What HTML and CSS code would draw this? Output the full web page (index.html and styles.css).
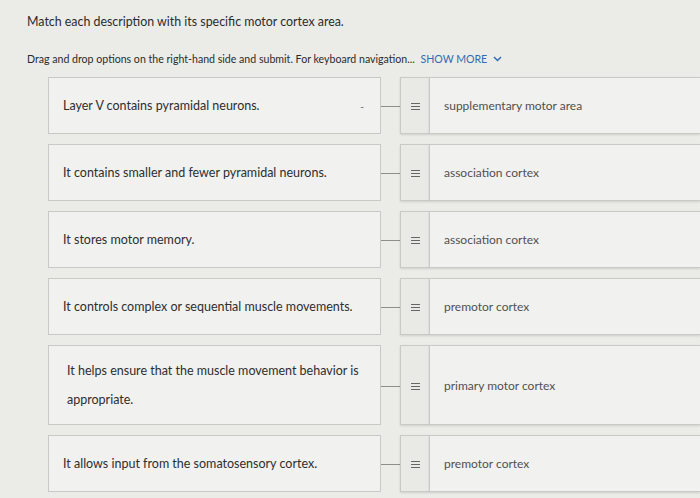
FILE: index.html
```html
<!DOCTYPE html>
<html>
<head>
<meta charset="utf-8">
<link rel="stylesheet" href="styles.css">
</head>
<body>
<div class="page">
  <p class="title">Match each description with its specific motor cortex area.</p>
  <p class="instructions">Drag and drop options on the right-hand side and submit. For keyboard navigation... <span class="more">SHOW MORE <svg class="chev" width="9" height="6" viewBox="0 0 9 6"><path d="M1 1l3.5 3.5L8 1" fill="none" stroke="#2f6bb3" stroke-width="1.5"/></svg></span></p>
  <div class="rows">
    <div class="row">
      <div class="desc">Layer V contains pyramidal neurons.<span class="dash">-</span></div>
      <div class="line"></div>
      <div class="handle"><span class="grip"></span></div>
      <div class="answer">supplementary motor area</div>
    </div>
    <div class="row">
      <div class="desc">It contains smaller and fewer pyramidal neurons.</div>
      <div class="line"></div>
      <div class="handle"><span class="grip"></span></div>
      <div class="answer">association cortex</div>
    </div>
    <div class="row">
      <div class="desc">It stores motor memory.</div>
      <div class="line"></div>
      <div class="handle"><span class="grip"></span></div>
      <div class="answer">association cortex</div>
    </div>
    <div class="row">
      <div class="desc">It controls complex or sequential muscle movements.</div>
      <div class="line"></div>
      <div class="handle"><span class="grip"></span></div>
      <div class="answer">premotor cortex</div>
    </div>
    <div class="row tall">
      <div class="desc two">It helps ensure that the muscle movement behavior is appropriate.</div>
      <div class="line"></div>
      <div class="handle"><span class="grip"></span></div>
      <div class="answer">primary motor cortex</div>
    </div>
    <div class="row">
      <div class="desc">It allows input from the somatosensory cortex.</div>
      <div class="line"></div>
      <div class="handle"><span class="grip"></span></div>
      <div class="answer">premotor cortex</div>
    </div>
  </div>
</div>
</body>
</html>
```
FILE: styles.css
```css
html, body {
  margin: 0;
  padding: 0;
  background: #ebebe8;
  font-family: "Source Sans Pro", Lato, "Open Sans", sans-serif;
  color: #333;
  overflow: hidden;
}
.page {
  width: 700px;
  height: 498px;
  padding: 13px 0 0 27px;
  box-sizing: border-box;
}
.title {
  margin: 0;
  font-size: 12.4px;
  line-height: 18px;
  color: #2b2b2b;
}
.instructions {
  margin: 21px 0 0;
  font-size: 10.6px;
  line-height: 14px;
  color: #2b2b2b;
}
.more {
  color: #2f6bb3;
  margin-left: 3px;
}
.chev {
  margin-left: 3px;
  vertical-align: 1px;
}
.rows {
  margin: 11px 0 0 21px;
  display: flex;
  flex-direction: column;
  gap: 10px;
}
.row {
  display: grid;
  grid-template-columns: 333px 19px 29px 1fr;
  height: 57px;
}
.row.tall {
  height: 80px;
}
.desc {
  background: #f1f1ef;
  border: 1px solid #c9c9c6;
  display: flex;
  align-items: center;
  padding: 0 16px 0 14px;
  font-size: 12.5px;
  color: #2e2e2e;
}
.desc.two {
  line-height: 29px;
  padding-right: 14px;
  padding-left: 18px;
}
.dash {
  margin-left: auto;
  font-size: 10px;
  color: #555;
}
.line {
  align-self: center;
  height: 1px;
  background: #8e8e8c;
  margin-top: 2px;
}
.handle {
  background: #e9e9e6;
  border: 1px solid #c9c9c6;
  border-right: none;
  display: flex;
  align-items: center;
  justify-content: center;
  box-shadow: 0 1px 2px rgba(0,0,0,0.12);
}
.grip {
  width: 9px;
  height: 7px;
  border-top: 1px solid #666;
  border-bottom: 1px solid #666;
  box-sizing: border-box;
  position: relative;
  margin-top: 2px;
}
.grip::after {
  content: "";
  position: absolute;
  left: 0;
  right: 0;
  top: 2px;
  height: 1px;
  background: #666;
}
.answer {
  background: #f1f1ef;
  border: 1px solid #c9c9c6;
  border-right: none;
  display: flex;
  align-items: center;
  padding-left: 14px;
  font-size: 12px;
  color: #505050;
  box-shadow: 0 1px 2px rgba(0,0,0,0.12);
}
```
